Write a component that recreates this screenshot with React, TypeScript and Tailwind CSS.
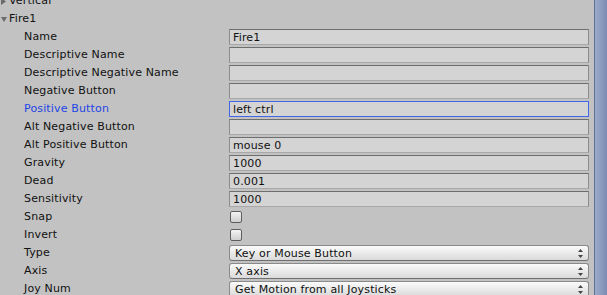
import React from "react";

type Row =
  | { kind: "text"; label: string; value: string; focused?: boolean }
  | { kind: "check"; label: string }
  | { kind: "popup"; label: string; value: string };

const ROWS: Row[] = [
  { kind: "text", label: "Name", value: "Fire1" },
  { kind: "text", label: "Descriptive Name", value: "" },
  { kind: "text", label: "Descriptive Negative Name", value: "" },
  { kind: "text", label: "Negative Button", value: "" },
  { kind: "text", label: "Positive Button", value: "left ctrl", focused: true },
  { kind: "text", label: "Alt Negative Button", value: "" },
  { kind: "text", label: "Alt Positive Button", value: "mouse 0" },
  { kind: "text", label: "Gravity", value: "1000" },
  { kind: "text", label: "Dead", value: "0.001" },
  { kind: "text", label: "Sensitivity", value: "1000" },
  { kind: "check", label: "Snap" },
  { kind: "check", label: "Invert" },
  { kind: "popup", label: "Type", value: "Key or Mouse Button" },
  { kind: "popup", label: "Axis", value: "X axis" },
  { kind: "popup", label: "Joy Num", value: "Get Motion from all Joysticks" },
];

function Foldout({ label, open }: { label: string; open: boolean }) {
  return (
    <div className="flex items-center h-[18px]">
      <div className="w-[9px] flex justify-start pl-[1px]">
        {open ? (
          <svg width="7" height="7" viewBox="0 0 7 7">
            <path d="M0 1 L6 1 L3 6 Z" fill="#6b6b6b" />
          </svg>
        ) : (
          <svg width="7" height="7" viewBox="0 0 7 7">
            <path d="M0 0 L5 3.5 L0 7 Z" fill="#6b6b6b" />
          </svg>
        )}
      </div>
      <span className="text-[#111] pt-[1px]">{label}</span>
    </div>
  );
}

function UpDown() {
  return (
    <svg width="5" height="9" viewBox="0 0 5 9">
      <path d="M2.5 0 L5 3 L0 3 Z" fill="#444" />
      <path d="M0 6 L5 6 L2.5 9 Z" fill="#444" />
    </svg>
  );
}

function Field({ row }: { row: Row }) {
  if (row.kind === "text") {
    return (
      <div
        className={
          "w-[360px] h-[16px] flex items-center px-[3px] bg-[#d4d4d4] border " +
          (row.focused
            ? "border-[#4266e6]"
            : "border-[#8c8c8c] border-t-[#6e6e6e] border-b-[#a8a8a8]")
        }
      >
        <span className="text-[#111] leading-none pt-[1px]">{row.value}</span>
      </div>
    );
  }
  if (row.kind === "check") {
    return (
      <div className="w-[360px] h-[16px] flex items-center pl-[1px]">
        <div className="w-[12px] h-[12px] rounded-[2px] border border-[#5e5e5e] bg-gradient-to-b from-[#f4f4f4] to-[#cfcfcf]" />
      </div>
    );
  }
  return (
    <div className="w-[360px] h-[16px] flex items-center justify-between pl-[5px] pr-[5px] rounded-[3px] border border-[#8a8a8a] border-b-[#707070] bg-gradient-to-b from-[#fbfbfb] to-[#dadada]">
      <span className="text-[#111] leading-none pt-[1px]">{row.value}</span>
      <UpDown />
    </div>
  );
}

export default function App() {
  return (
    <div
      className="w-[607px] h-[295px] overflow-hidden flex bg-[#c2c2c2] text-[11px] tracking-[0.15px]"
      style={{ fontFamily: '"DejaVu Sans", Verdana, sans-serif' }}
    >
      <div className="flex-1 -mt-[8px]">
        <Foldout label="Vertical" open={false} />
        <Foldout label="Fire1" open={true} />
        {ROWS.map((row) => (
          <div key={row.label} className="flex items-center h-[18px]">
            <div
              className={
                "w-[229px] pl-[24px] pt-[1px] " +
                (row.kind === "text" && row.focused ? "text-[#1f45e6]" : "text-[#111]")
              }
            >
              {row.label}
            </div>
            <Field row={row} />
          </div>
        ))}
      </div>
      <div className="w-[13px] h-full border-l border-[#5f6f92] bg-gradient-to-r from-[#9cabcb] to-[#7b8db3]" />
    </div>
  );
}
